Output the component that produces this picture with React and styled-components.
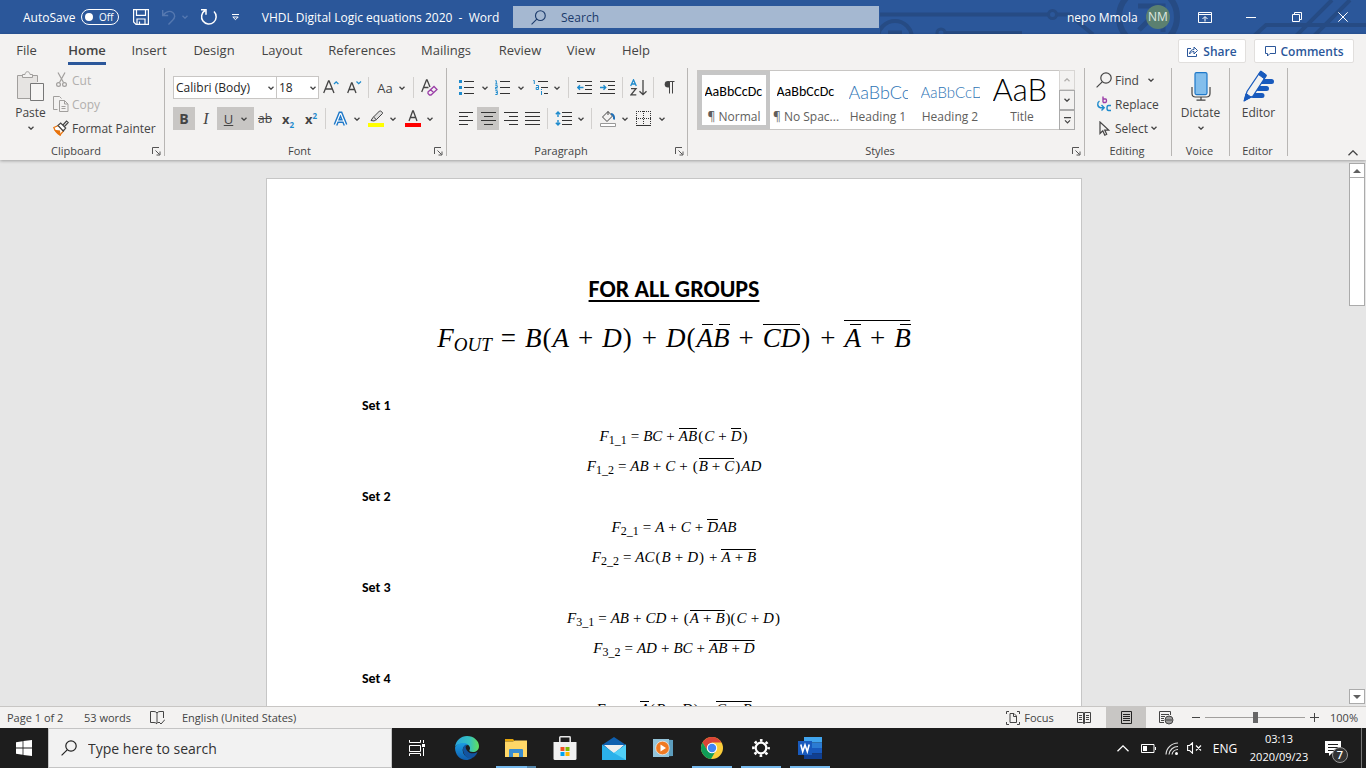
import React, { useState } from 'react';

import styled, { createGlobalStyle } from 'styled-components'


const GlobalStyle = createGlobalStyle`
  * {
    box-sizing: border-box;
  }

  body {
    margin: 0;
    font-family: "Segoe UI", "Open Sans", "Noto Sans", sans-serif;
    font-size: 12px;
    color: #444;
    background: #e6e6e6;
  }

  button, input, select {
    font: inherit;
    color: inherit;
  }

  button {
    padding: 0;
    border: 0;
    background: none;
  }
`

const Window = styled.div`
  display: flex;
  flex-direction: column;
  height: 100vh;
  overflow: hidden;
`

const Svg = styled.svg`
  display: block;
  flex: none;
  fill: none;
  stroke: ${props => props.$color || "#444"};
  stroke-width: ${props => props.$line || 1};
`


/* title bar */

const TitleBar = styled.header`
  position: relative;
  display: flex;
  align-items: center;
  height: 34px;
  flex: none;
  color: #fff;
  background: #2b579a;
`

const Circuit = styled.svg`
  position: absolute;
  right: 0;
  top: 0;
  fill: none;
  stroke: #264b84;
  stroke-width: 4;
`

const QuickAccess = styled.div`
  display: flex;
  align-items: center;
  width: 248px;
  padding-left: 23px;
`

const AutoSave = styled.label`
  display: flex;
  align-items: center;
  gap: 6px;
  width: 103px;
`

const Toggle = styled.input`
  appearance: none;
  position: relative;
  width: 38px;
  height: 16px;
  margin: 0;
  border: 1px solid #fff;
  border-radius: 8px;

  &::before {
    content: "";
    position: absolute;
    left: 3px;
    top: 3px;
    width: 8px;
    height: 8px;
    border-radius: 50%;
    background: #fff;
  }

  &::after {
    content: "Off";
    position: absolute;
    right: 5px;
    top: 0;
    font-size: 10px;
    line-height: 14px;
  }
`

const BarButton = styled.button`
  display: flex;
  align-items: center;
  justify-content: center;
  gap: 6px;
  width: ${props => props.$w}px;
  height: 34px;
`

const DocTitle = styled.div`
  width: 265px;
  text-align: center;
  white-space: nowrap;
`

const SearchBox = styled.label`
  position: relative;
  display: flex;
  align-items: center;
  flex: 0 1 366px;
  height: 22px;
  padding-left: 18px;
  gap: 15px;
  background: #a5b8d1;
`

const SearchInput = styled.input`
  flex: 1;
  min-width: 0;
  padding: 0;
  border: 0;
  outline: 0;
  background: none;
  color: #1b3a6b;

  &::placeholder {
    color: #1b3a6b;
    opacity: 1;
  }
`

const Account = styled.div`
  position: relative;
  display: flex;
  align-items: center;
  margin-left: auto;
`

const UserName = styled.span`
  width: 79px;
`

const Avatar = styled.span`
  width: 24px;
  height: 24px;
  margin-right: 11px;
  border-radius: 50%;
  background: #5b8070;
  color: #dfe8e0;
  line-height: 24px;
  text-align: center;
`


/* ribbon */

const Ribbon = styled.section`
  position: relative;
  z-index: 1;
  flex: none;
  height: 126px;
  background: #f3f2f1;
  box-shadow: 0 1px 3px hsla(0, 0%, 0%, .3);
`

const Tabs = styled.nav`
  display: flex;
  align-items: center;
  height: 34px;
  padding-right: 12px;
  font-size: 13px;
`

const Tab = styled.button`
  display: flex;
  justify-content: center;
  width: ${props => props.$w}px;
  font-weight: ${props => props.$active ? 600 : 400};
`

const TabLabel = styled.span`
  line-height: 24px;
  border-bottom: 3px solid ${props => props.$active ? "#2b579a" : "transparent"};
`

const TabActions = styled.div`
  display: flex;
  gap: 8px;
  margin-left: auto;
`

const ActionButton = styled.button`
  display: flex;
  align-items: center;
  justify-content: center;
  gap: 5px;
  width: ${props => props.$w}px;
  height: 24px;
  border: 1px solid #e1dfdd;
  border-radius: 2px;
  background: #fff;
  color: #2b579a;
  font-size: 12px;
  font-weight: 600;
`

const Groups = styled.div`
  display: flex;
  height: 88px;
`

const Group = styled.div`
  display: flex;
  flex-direction: column;
  width: ${props => props.$w}px;
  height: 88px;
  border-right: 1px solid #b8b6b4;
`

const GroupBody = styled.div`
  display: flex;
  flex: 1;
  padding: ${props => props.$pad || "0"};
`

const GroupFoot = styled.div`
  display: flex;
  align-items: center;
  height: 10px;
  padding-right: 2px;
  font-size: 11px;
  line-height: 10px;
`

const GroupName = styled.span`
  flex: 1;
  text-align: center;
`

const Launcher = styled.button`
  width: 10px;
  height: 8px;
`

const BigButton = styled.button`
  display: flex;
  flex-direction: column;
  align-items: center;
  width: ${props => props.$w}px;
  height: 66px;
`

const BigIcon = styled.span`
  display: flex;
  align-items: center;
  height: 36px;
`

const BigLabel = styled.span`
  line-height: 18px;
  height: 22px;
`

const Stack = styled.div`
  display: flex;
  flex-direction: column;
`

const RowButton = styled.button`
  display: flex;
  align-items: center;
  gap: 3px;
  height: 24px;
  white-space: nowrap;
  color: ${props => props.$off ? "#b1afad" : "#444"};
`

const RowIcon = styled.span`
  display: flex;
  justify-content: center;
  width: 16px;
`

const ToolRow = styled.div`
  display: flex;
  align-items: center;
  height: ${props => props.$h}px;
`

const Tool = styled.button`
  display: flex;
  align-items: center;
  justify-content: center;
  gap: ${props => props.$gap || 6}px;
  width: ${props => props.$w}px;
  height: 23px;
  background: ${props => props.$on ? "#c8c6c4" : "none"};
`

const ToolLine = styled.span`
  width: 1px;
  height: 21px;
  margin: 0 ${props => props.$m}px;
  background: #d2d0ce;
`

const Combo = styled.div`
  position: relative;
  width: ${props => props.$w}px;
  height: 23px;

  & + & {
    margin-left: -1px;
  }
`

const ComboSelect = styled.select`
  appearance: none;
  width: 100%;
  height: 23px;
  padding: 0 2px;
  border: 1px solid #c8c6c4;
  border-radius: 0;
  background: #fff;
  color: #262626;
`

const ComboArrow = styled.span`
  position: absolute;
  right: 3px;
  top: 10px;
  pointer-events: none;
`

const Glyph = styled.span`
  font-size: ${props => props.$size || 14}px;
  font-weight: ${props => props.$bold ? 700 : 400};
  font-style: ${props => props.$italic ? "italic" : "normal"};
  font-family: ${props => props.$serif ? '"Liberation Serif", serif' : "inherit"};
  text-decoration: ${props => props.$deco || "none"};
  line-height: 18px;

  sub, sup {
    font-size: 8px;
    line-height: 0;
    color: #1e8bcd;
  }
`

const Gallery = styled.div`
  display: flex;
  width: 378px;
  height: 60px;
  border: 1px solid #c8c6c4;
  background: #fff;
`

const StyleCard = styled.button`
  display: flex;
  flex-direction: column;
  align-items: center;
  width: 72px;
  height: 58px;
  border: 4px solid ${props => props.$on ? "#c6c6c6" : "transparent"};
`

const StyleSample = styled.span`
  width: 59px;
  height: 33px;
  overflow: hidden;
  text-align: left;
  white-space: nowrap;
  font-family: ${props => props.$light ? "Calibri Light, Lato, sans-serif" : "Calibri, Carlito, Lato, sans-serif"};
  font-size: ${props => props.$size}px;
  font-weight: ${props => props.$light ? 300 : 400};
  line-height: ${props => props.$lh || 34}px;
  color: ${props => props.$color || "#000"};
`

const StyleName = styled.span`
  line-height: 17px;
  white-space: nowrap;
  color: #605e5c;
`

const GalleryButtons = styled.div`
  display: flex;
  flex-direction: column;
  width: 16px;
  margin: -1px -1px -1px auto;
`

const GalleryButton = styled.button`
  display: flex;
  align-items: center;
  justify-content: center;
  flex: 1;
  border: 1px solid ${props => props.$off ? "#d8d6d4" : "#aaa"};
  background: #f3f2f1;
`

const Collapse = styled.button`
  align-self: flex-end;
  margin: 0 8px 0 auto;
`


/* document */

const Workspace = styled.main`
  display: flex;
  flex: 1;
  min-height: 0;
  padding-top: 3px;
`

const Canvas = styled.div`
  flex: 1;
  padding-top: 15px;
  overflow: hidden;
`

const Page = styled.article`
  width: 816px;
  min-height: 1056px;
  margin: 0 auto;
  padding: 95px;
  border: 1px solid #c6c6c6;
  background: #fff;
  color: #000;
  font-family: Calibri, Carlito, Lato, sans-serif;
`

const DocHeading = styled.h1`
  margin: 0;
  font-size: 24px;
  line-height: 30px;
  text-align: center;
  text-decoration: underline;
  text-decoration-thickness: 2px;
  text-underline-offset: 3px;
  text-decoration-skip-ink: none;
`

const SetHeading = styled.h2`
  margin: 0;
  font-size: 14px;
  line-height: 31px;
`

const Equation = styled.p`
  margin: 0;
  text-align: center;
  white-space: nowrap;
  font-family: "Cambria Math", "Liberation Serif", serif;
  font-style: italic;
  font-size: ${props => props.$big ? 27 : 15}px;
  line-height: ${props => props.$big ? 68 : 30}px;
  margin-bottom: ${props => props.$big ? 18 : 0}px;

  sub {
    font-size: ${props => props.$big ? 19 : 12}px;
    font-style: ${props => props.$big ? "italic" : "normal"};
    line-height: 0;
    vertical-align: ${props => props.$big ? -4 : -3}px;
  }
`

const Op = styled.span`
  margin: 0 ${props => props.$big ? 9 : 4}px;
  font-style: normal;
`

const Paren = styled.span`
  font-style: normal;
  margin: 0 1px;
`

// a negation bar; an accent is the short bar over a single letter
const Bar = styled.span`
  display: inline-block;
  padding-top: ${props => props.$outer ? 4 : 1}px;
  background: linear-gradient(#000, #000) right top / ${props => props.$accent ? "11px" : "100%"} 1px no-repeat;
  line-height: ${props => props.$big ? 26 : 14}px;
`

const Scroll = styled.div`
  display: flex;
  flex-direction: column;
  width: 18px;
  padding: 0 1px 2px;
`

const ScrollButton = styled.button`
  display: flex;
  align-items: center;
  justify-content: center;
  height: 15px;
  border: 1px solid #ababab;
  background: #fff;
`

const ScrollThumb = styled.div`
  height: 128px;
  margin-bottom: auto;
  border: 1px solid #ababab;
  border-top: 0;
  background: #fff;
`


/* status bar */

const StatusBar = styled.footer`
  display: flex;
  align-items: center;
  flex: none;
  height: 22px;
  padding: 0 8px 0 7px;
  border-top: 1px solid #c8c6c4;
  background: #f3f2f1;
  font-size: 11px;
  white-space: nowrap;
`

const StatusItem = styled.span`
  width: ${props => props.$w}px;
`

const StatusRight = styled.div`
  display: flex;
  align-items: center;
  margin-left: auto;
`

const ViewButton = styled.button`
  display: flex;
  align-items: center;
  justify-content: center;
  gap: 4px;
  width: ${props => props.$w}px;
  height: 21px;
  background: ${props => props.$on ? "#c8c6c4" : "none"};
`

const Zoom = styled.input`
  appearance: none;
  width: 100px;
  height: 11px;
  margin: 0;
  background: linear-gradient(#a19f9d, #a19f9d) center / 100% 1px no-repeat;

  &::-webkit-slider-thumb {
    appearance: none;
    width: 5px;
    height: 11px;
    background: #666;
  }
`

const ZoomValue = styled.span`
  width: 34px;
  text-align: right;
`


/* taskbar */

const Taskbar = styled.div`
  display: flex;
  flex: none;
  height: 40px;
  background: #1d1d1d;
  color: #fff;
`

const TaskButton = styled.button`
  position: relative;
  display: flex;
  align-items: center;
  justify-content: center;
  width: ${props => props.$w || 49}px;
  height: 40px;

  &::after {
    content: "";
    position: absolute;
    left: 5px;
    bottom: 0;
    width: 40px;
    height: ${props => props.$open ? 2 : 0}px;
    background: ${props => props.$many ? "linear-gradient(90deg, #76b9ed 31px, #5586ab 31px)" : "#76b9ed"};
  }
`

const TaskSearch = styled.label`
  display: flex;
  align-items: center;
  gap: 11px;
  width: 344px;
  padding-left: 12px;
  border: 1px solid #c4c4c4;
  background: #f2f2f2;
`

const TaskInput = styled.input`
  flex: 1;
  min-width: 0;
  padding: 0;
  border: 0;
  outline: 0;
  background: none;
  font-size: 14px;

  &::placeholder {
    color: #333;
    opacity: 1;
  }
`

const Tray = styled.div`
  display: flex;
  align-items: center;
  margin-left: auto;
  padding-right: 4px;
`

const TrayButton = styled.button`
  display: flex;
  align-items: center;
  justify-content: center;
  width: ${props => props.$w}px;
  height: 40px;
`

const Clock = styled.button`
  width: 76px;
  line-height: 18px;
  font-size: 11px;
`

const Notices = styled.button`
  position: relative;
  width: 45px;
  height: 40px;
  padding-left: 8px;
  border-right: 1px solid #777;
`

const Badge = styled.span`
  position: absolute;
  left: 15px;
  top: 19px;
  width: 16px;
  height: 16px;
  border: 1px solid #999;
  border-radius: 50%;
  background: #333;
  font-size: 11px;
  font-weight: 600;
  line-height: 14px;
`


function Chevron(props) {
  return (
    <Svg width="6" height="4" viewBox="0 0 6 4" $color={props.color} $line={1.3}>
      <path d={props.up ? "M.5 3.3 3 .8 5.5 3.3" : "M.5.7 3 3.2 5.5.7"} />
    </Svg>
  )
}

function Lens(props) {
  return (
    <Svg width={props.size} height={props.size} viewBox="0 0 16 16" $color={props.color} $line={1.2}>
      <circle cx="10" cy="6" r="5.2" />
      <path d="M6.2 9.8.6 15.4" />
    </Svg>
  )
}

// each entry is [y, x1, x2]
function Lines(props) {
  return (
    <Svg width="15" height="15" viewBox="0 0 15 15" $color="#333">
      {props.rows.map((r) => <path key={r[0]} d={`M${r[1]} ${r[0]}.5H${r[2]}`} />)}
      {props.children}
    </Svg>
  )
}

function LaunchIcon() {
  return (
    <Svg width="9" height="9" viewBox="0 0 9 9" $color="#555">
      <path d="M.5 7V.5H7M3.5 3.5l4 4M8 4.5v3.5H4.5" />
    </Svg>
  )
}

function RibbonGroup(props) {
  return (
    <Group $w={props.width}>
      <GroupBody $pad={props.pad}>{props.children}</GroupBody>
      <GroupFoot>
        <GroupName>{props.name}</GroupName>
        {props.launcher && <Launcher aria-label={props.name + " settings"}><LaunchIcon /></Launcher>}
      </GroupFoot>
    </Group>
  )
}


function TopBar() {
  return (
    <TitleBar>
      <Circuit width="486" height="34" viewBox="0 0 486 34">
        <path d="M0 14.5h168M177 14.5h12l24 20M64 33h78" />
        <circle cx="172.500" cy="14.500" r="4" strokeWidth="3" />
        <circle cx="61" cy="33" r="4" strokeWidth="3" />
        <circle cx="15" cy="38" r="17" />
        <path d="M8 33h14M258 6h25v26M281 8l-22 22" strokeWidth="5" />
        <circle cx="268" cy="17" r="29" strokeWidth="6" />
        <path d="M374 36l12-11h100M416 36l36-36M434 36l36-36" />
      </Circuit>
      <QuickAccess>
        <AutoSave>AutoSave <Toggle type="checkbox" /></AutoSave>
        <BarButton $w={30} aria-label="Save">
          <Svg width="16" height="16" viewBox="0 0 16 16" $color="#fff" $line={1.2}>
            <path d="M.6.6h14.800v14.800H3L.6 13zM3.500.6v5.800h9V.6M4 15.400V10h8v5.400M6.500 15v-2.500" />
          </Svg>
        </BarButton>
        <BarButton $w={38} aria-label="Undo">
          <Svg width="14" height="16" viewBox="0 0 14 16" $color="#5578b0" $line={1.400}>
            <path d="M.7 1v5.500h5.500M1 6.200C4 2.500 8 1.500 10.800 3.500c3 2.500 2 5.500 0 7.500L6.500 15.500" />
          </Svg>
          <Chevron color="#5578b0" />
        </BarButton>
        <BarButton $w={29} aria-label="Redo">
          <Svg width="18" height="18" viewBox="0 0 18 18" $color="#fff" $line={1.500}>
            <path d="M5 2.500A7.300 7.300 0 1 0 14 3.500M1 1.700h5v5" />
          </Svg>
        </BarButton>
        <BarButton $w={25} aria-label="Customize">
          <Svg width="7" height="7" viewBox="0 0 7 7" $color="#fff">
            <path d="M0 .5h7M.8 3 3.500 5.700 6.200 3z" />
          </Svg>
        </BarButton>
      </QuickAccess>
      <DocTitle>VHDL Digital Logic equations 2020 &nbsp;-&nbsp; Word</DocTitle>
      <SearchBox>
        <Lens size={15} color="#1b3a6b" />
        <SearchInput type="text" placeholder="Search" aria-label="Search" />
      </SearchBox>
      <Account>
        <UserName>nepo Mmola</UserName>
        <Avatar>NM</Avatar>
        <BarButton $w={47} aria-label="Ribbon options">
          <Svg width="14" height="11" viewBox="0 0 14 11" $color="#fff">
            <path d="M.5.5h13v10H.5zM.5 2.500h13M7 9.500V5M4.500 7 7 4.500 9.500 7" />
          </Svg>
        </BarButton>
        <BarButton $w={46} aria-label="Minimize">
          <Svg width="10" height="1" viewBox="0 0 10 1" $color="#fff"><path d="M0 .5h10" /></Svg>
        </BarButton>
        <BarButton $w={46} aria-label="Restore">
          <Svg width="10" height="10" viewBox="0 0 10 10" $color="#fff">
            <path d="M.5 2.500h7v7h-7zM2.500 2.500v-2h7v7h-2" />
          </Svg>
        </BarButton>
        <BarButton $w={46} aria-label="Close">
          <Svg width="10" height="10" viewBox="0 0 10 10" $color="#fff"><path d="M.3.3l9.400 9.400M9.700.3.3 9.700" /></Svg>
        </BarButton>
      </Account>
    </TitleBar>
  )
}


const tabs = [
  ["File", 53], ["Home", 68], ["Insert", 56], ["Design", 74], ["Layout", 62], ["References", 98],
  ["Mailings", 70], ["Review", 78], ["View", 44], ["Help", 66],
]

function TabStrip() {

  const [active, setActive] = useState("Home");

  return (
    <Tabs>
      {tabs.map(([name, w]) => (
        <Tab key={name} $w={w} $active={name === active} onClick={() => setActive(name)}>
          <TabLabel $active={name === active}>{name}</TabLabel>
        </Tab>
      ))}
      <TabActions>
        <ActionButton $w={68}>
          <Svg width="11" height="11" viewBox="0 0 11 11" $color="#2b579a">
            <path d="M4 2.500H.5v8h9V8M2.500 8c.3-3 2-4.500 4.500-4.500V1l3.500 3.500L7 8V5.500C5 5.500 3.500 6.300 2.500 8z" />
          </Svg>
          Share
        </ActionButton>
        <ActionButton $w={100}>
          <Svg width="11" height="11" viewBox="0 0 11 11" $color="#2b579a">
            <path d="M.5.5h10v7H5L2.500 10V7.500h-2z" />
          </Svg>
          Comments
        </ActionButton>
      </TabActions>
    </Tabs>
  )
}


function ClipboardGroup() {
  return (
    <RibbonGroup name="Clipboard" width={165} pad="0 0 0 8px" launcher>
      <BigButton $w={45}>
        <BigIcon>
          <Svg width="28" height="31" viewBox="0 0 28 31" $color="#a19f9d">
            <path d="M6 4.500H.5v23H13M15 4.500h5.500V11" fill="#e8e8e8" />
            <path d="M1 5h19v7h-7v15H1z" fill="#e6e4e2" stroke="none" />
            <path d="M5.500 6.500v-3h2.500C8.300 1.500 9.300.7 10.500.7s2.200.8 2.500 2.800h2.500v3z" fill="#f3f2f1" />
            <path d="M13.500 12.500h13v17h-13z" fill="#f6f5f4" stroke="#777" />
          </Svg>
        </BigIcon>
        <BigLabel>Paste</BigLabel>
        <Chevron />
      </BigButton>
      <Stack>
        <RowButton $off>
          <RowIcon>
            <Svg width="11" height="16" viewBox="0 0 11 16" $color="#a19f9d" $line={1.200}>
              <path d="M2 .5l5.500 10M9 .5l-5.500 10" />
              <circle cx="2.500" cy="12.500" r="1.900" /><circle cx="8.500" cy="12.500" r="1.900" />
            </Svg>
          </RowIcon>
          Cut
        </RowButton>
        <RowButton $off>
          <RowIcon>
            <Svg width="16" height="16" viewBox="0 0 16 16" $color="#a19f9d">
              <path d="M4.500 13.500h-4V.5h6l2 2M6.500 4.500h5l3.500 3.500v7.500H6.500zM11.500 4.500V8H15M8.500 10.500h4M8.500 12.500h4" />
            </Svg>
          </RowIcon>
          Copy
        </RowButton>
        <RowButton>
          <RowIcon>
            <Svg width="16" height="16" viewBox="0 0 16 16" $line={1.200}>
              <path d="M.8 7.500 5.500 5.500l5 5.500-3.500 4C5 14 2 11 .8 7.500z" fill="#fff" stroke="#e8730c" />
              <path d="M2.500 10.500l4 .5.5 4z" fill="#e8730c" stroke="#e8730c" />
              <path d="M5 5.500 7.700 3l5 5-2.500 3zM10 5l3.500-4 1.700 1.500-3.700 4" fill="#fff" />
            </Svg>
          </RowIcon>
          Format Painter
        </RowButton>
      </Stack>
    </RibbonGroup>
  )
}


function FontGroup() {
  return (
    <RibbonGroup name="Font" width={282} pad="4px 0 0 8px" launcher>
      <Stack>
        <ToolRow $h={31}>
          <Combo $w={104}>
            <ComboSelect aria-label="Font"><option>Calibri (Body)</option></ComboSelect>
            <ComboArrow><Chevron /></ComboArrow>
          </Combo>
          <Combo $w={43}>
            <ComboSelect aria-label="Font size"><option>18</option></ComboSelect>
            <ComboArrow><Chevron /></ComboArrow>
          </Combo>
          <Tool $w={24} aria-label="Grow font">
            <Svg width="16" height="15" viewBox="0 0 16 15" $line={1.300}>
              <path d="M.7 13 5.500 1h.6L11 13M2.500 9h6.700" /><path d="M11 4l2.200-2.200L15.400 4" stroke="#1e8bcd" />
            </Svg>
          </Tool>
          <Tool $w={22} aria-label="Shrink font">
            <Svg width="15" height="15" viewBox="0 0 15 15" $line={1.300}>
              <path d="M.7 13 4.500 3h.6L9 13M2 9.500h5.700" /><path d="M9.500 1.500l2.200 2.200L14 1.500" stroke="#1e8bcd" />
            </Svg>
          </Tool>
          <ToolLine $m={3} />
          <Tool $w={38}><Glyph $size={13}>Aa</Glyph><Chevron /></Tool>
          <ToolLine $m={3} />
          <Tool $w={24} aria-label="Clear formatting">
            <Svg width="17" height="17" viewBox="0 0 17 17" $line={1.300}>
              <path d="M.7 13 5.500 1h.6L9 8M2.500 8.500h5" />
              <path d="M7 13l6-5.500 3 3-6 5.500H8.500L7 14.500zM9.500 10.500l3.500 3.500" stroke="#9b3fa8" />
            </Svg>
          </Tool>
        </ToolRow>
        <ToolRow $h={31}>
          <Tool $w={22} $on><Glyph $bold>B</Glyph></Tool>
          <Tool $w={22}><Glyph $italic $serif $size={16}>I</Glyph></Tool>
          <Tool $w={37} $on $gap={8}><Glyph $size={13} $deco="underline">U</Glyph><Chevron /></Tool>
          <Tool $w={22}><Glyph $size={12} $deco="line-through">ab</Glyph></Tool>
          <Tool $w={24}><Glyph $bold $size={13}>x<sub>2</sub></Glyph></Tool>
          <Tool $w={22}><Glyph $bold $size={13}>x<sup>2</sup></Glyph></Tool>
          <ToolLine $m={3} />
          <Tool $w={35} aria-label="Text effects">
            <Svg width="15" height="16" viewBox="0 0 15 16" $color="#1e78c8" $line={4}>
              <path d="M2.500 14 7.200 2.500h.6L12.500 14M4.500 10h6" />
              <path d="M2.500 14 7.200 2.500h.6L12.500 14M4.500 10h6" stroke="#fff" strokeWidth="1.200" />
            </Svg>
            <Chevron />
          </Tool>
          <Tool $w={36} aria-label="Highlight">
            <Svg width="16" height="17" viewBox="0 0 16 17">
              <path d="M3 10.500l2-3L11.500 1h1l2 1.500v1L8.500 9.500 6 11z" fill="#ddd" /><path d="M5.500 7l3 2.800" />
              <path d="M0 15h16" stroke="#ffff00" strokeWidth="4" />
            </Svg>
            <Chevron />
          </Tool>
          <Tool $w={38} aria-label="Font color">
            <Svg width="16" height="17" viewBox="0 0 16 17" $line={1.300}>
              <path d="M4 11 7.700 1h.6L12 11M5.500 7.500h5" />
              <path d="M0 15h16" stroke="#ff0000" strokeWidth="4" />
            </Svg>
            <Chevron />
          </Tool>
        </ToolRow>
      </Stack>
    </RibbonGroup>
  )
}


function ParagraphGroup() {
  return (
    <RibbonGroup name="Paragraph" width={241} pad="4px 0 0 8px" launcher>
      <Stack>
        <ToolRow $h={31}>
          <Tool $w={36} $gap={8} aria-label="Bullets">
            <Lines rows={[[1, 5, 15], [7, 5, 15], [13, 5, 15]]}>
              <path d="M0 1.500h3M0 7.500h3M0 13.500h3" stroke="#1e8bcd" strokeWidth="3" />
            </Lines>
            <Chevron />
          </Tool>
          <Tool $w={37} $gap={8} aria-label="Numbering">
            <Lines rows={[[1, 5, 15], [7, 5, 15], [13, 5, 15]]}>
              <path d="M.3.700h1V4M.2 4h2.300M.3 5.700h2v1.800h-2V9h2.200M.3 10.700h2v3.800h-2M.8 12.500h1.500" stroke="#1e8bcd" />
            </Lines>
            <Chevron />
          </Tool>
          <Tool $w={36} aria-label="Multilevel list">
            <Lines rows={[[1, 5, 15], [7, 8, 15], [13, 11, 15]]}>
              <path d="M.3.500h1V4M3 5.500h2.500v4H3.200V7.500h2.300M8.500 11V15M8.500 9v1" stroke="#1e8bcd" />
            </Lines>
            <Chevron />
          </Tool>
          <ToolLine $m={4} />
          <Tool $w={23} aria-label="Decrease indent">
            <Lines rows={[[1, 0, 15], [5, 8, 15], [9, 8, 15], [13, 0, 15]]}>
              <path d="M6.500 7.500H1M3 5.300.8 7.500 3 9.700" stroke="#1e8bcd" strokeWidth="1.400" />
            </Lines>
          </Tool>
          <Tool $w={22} aria-label="Increase indent">
            <Lines rows={[[1, 0, 15], [5, 8, 15], [9, 8, 15], [13, 0, 15]]}>
              <path d="M0 7.500h5.500M3.500 5.300l2.200 2.200-2.200 2.200" stroke="#1e8bcd" strokeWidth="1.400" />
            </Lines>
          </Tool>
          <ToolLine $m={4} />
          <Tool $w={23} aria-label="Sort">
            <Svg width="17" height="17" viewBox="0 0 17 17" $line={1.300}>
              <path d="M.7 7 3.500.8 6.300 7M1.700 5h3.600" stroke="#1e8bcd" />
              <path d="M1 9.700h5L1 15.800h5.300M13 1v14.500M9.500 12.200l3.500 3.500 3.500-3.500" />
            </Svg>
          </Tool>
          <ToolLine $m={3} />
          <Tool $w={24} aria-label="Show marks">
            <Svg width="11" height="13" viewBox="0 0 11 13">
              <path d="M5.500.5H10.500M5.500.5V12.500M8.500.5V12.500" />
              <path d="M5.500 0H4a3.300 3.300 0 0 0 0 6.600h1.500z" fill="#444" stroke="none" />
            </Svg>
          </Tool>
        </ToolRow>
        <ToolRow $h={31}>
          <Tool $w={22} aria-label="Align left">
            <Lines rows={[[1, 0, 14], [5, 0, 9], [9, 0, 14], [13, 0, 9]]} />
          </Tool>
          <Tool $w={22} $on aria-label="Center">
            <Lines rows={[[1, 0, 15], [5, 3, 12], [9, 0, 15], [13, 3, 12]]} />
          </Tool>
          <Tool $w={22} aria-label="Align right">
            <Lines rows={[[1, 1, 15], [5, 6, 15], [9, 1, 15], [13, 6, 15]]} />
          </Tool>
          <Tool $w={22} aria-label="Justify">
            <Lines rows={[[1, 0, 15], [5, 0, 15], [9, 0, 15], [13, 0, 15]]} />
          </Tool>
          <ToolLine $m={4} />
          <Tool $w={35} aria-label="Line spacing">
            <Svg width="17" height="15" viewBox="0 0 17 15">
              <path d="M7 1.500h10M7 5.500h10M7 9.500h10M7 13.500h10" stroke="#333" />
              <path d="M3 1v5M.8 3.200 3 1l2.200 2.200M3 9v5M.8 11.800 3 14l2.200-2.200" stroke="#1e8bcd" strokeWidth="1.400" />
            </Svg>
            <Chevron />
          </Tool>
          <ToolLine $m={4} />
          <Tool $w={36} aria-label="Shading">
            <Svg width="16" height="17" viewBox="0 0 16 17">
              <path d="M2.500 7 8 1.500 12.500 6 7 11.500zM8 1.500V5" /><path d="M11 4c2 0 3.500 2 3 5.500" stroke="#1e6fb8" strokeWidth="2" />
              <path d="M.5 13.500h15v3H.5z" fill="#fff" stroke="#999" />
            </Svg>
            <Chevron />
          </Tool>
          <Tool $w={37} $gap={8} aria-label="Borders">
            <Svg width="15" height="15" viewBox="0 0 15 15" $color="#333">
              <path d="M0 .5h15M.5 0v14M14.500 0v14M7.500 0v14M0 7.500h15" strokeDasharray="1 1" />
              <path d="M0 14.500h15" />
            </Svg>
            <Chevron />
          </Tool>
        </ToolRow>
      </Stack>
    </RibbonGroup>
  )
}


function StylesGroup() {
  return (
    <RibbonGroup name="Styles" width={397} pad="2px 0 0 9px" launcher>
      <Gallery>
        <StyleCard $on>
          <StyleSample $size={14}>AaBbCcDc</StyleSample>
          <StyleName>¶ Normal</StyleName>
        </StyleCard>
        <StyleCard>
          <StyleSample $size={14}>AaBbCcDc</StyleSample>
          <StyleName>¶ No Spac...</StyleName>
        </StyleCard>
        <StyleCard>
          <StyleSample $size={18} $light $color="#2e74b5">AaBbCc</StyleSample>
          <StyleName>Heading 1</StyleName>
        </StyleCard>
        <StyleCard>
          <StyleSample $size={15} $light $color="#2e74b5">AaBbCcD</StyleSample>
          <StyleName>Heading 2</StyleName>
        </StyleCard>
        <StyleCard>
          <StyleSample $size={31} $light $lh={28}>AaB</StyleSample>
          <StyleName>Title</StyleName>
        </StyleCard>
        <GalleryButtons>
          <GalleryButton $off aria-label="Previous styles"><Chevron up color="#b1afad" /></GalleryButton>
          <GalleryButton aria-label="Next styles"><Chevron /></GalleryButton>
          <GalleryButton aria-label="More styles">
            <Svg width="7" height="7" viewBox="0 0 7 7" $line={1.200}><path d="M0 .6h7M1 3.300l2.500 2.500L6 3.300" /></Svg>
          </GalleryButton>
        </GalleryButtons>
      </Gallery>
    </RibbonGroup>
  )
}


function EditingGroup() {
  return (
    <RibbonGroup name="Editing" width={87} pad="0 0 0 11px">
      <Stack>
        <RowButton>
          <RowIcon><Lens size={16} color="#444" /></RowIcon>
          Find &nbsp;<Chevron />
        </RowButton>
        <RowButton>
          <RowIcon>
            <Svg width="16" height="16" viewBox="0 0 16 16" $color="#1e8bcd" $line={1.400}>
              <path d="M7 .5v6M7 3h2.500q1 0 1 1.700T9.500 6.500H7" stroke="#9b3fa8" />
              <path d="M15 9.500h-2.500q-1.500 0-1.500 2.500t1.500 2.500H15M3.500 5C1 6.500 1 11 4.500 11.700H8M5.500 9 8.200 11.700 5.500 14.500" />
            </Svg>
          </RowIcon>
          Replace
        </RowButton>
        <RowButton>
          <RowIcon>
            <Svg width="11" height="15" viewBox="0 0 11 15" $line={1.200}>
              <path d="M1 1v11.500l2.800-2.700 2 4.400 1.900-.9-2-4.200h4z" />
            </Svg>
          </RowIcon>
          Select <Chevron />
        </RowButton>
      </Stack>
    </RibbonGroup>
  )
}


function RibbonBar() {
  return (
    <Ribbon>
      <TabStrip />
      <Groups>
        <ClipboardGroup />
        <FontGroup />
        <ParagraphGroup />
        <StylesGroup />
        <EditingGroup />
        <RibbonGroup name="Voice" width={58}>
          <BigButton $w={57}>
            <BigIcon>
              <Svg width="20" height="29" viewBox="0 0 20 29" $line={1.200}>
                <rect x="4" y=".6" width="12" height="22" rx="1.500" fill="#83beec" stroke="#1e78c8" />
                <path d="M1 15v6.500c0 2 1.500 3.500 3.500 3.500h11c2 0 3.500-1.500 3.500-3.500V15M10 25v3M5.500 28.200h9" />
              </Svg>
            </BigIcon>
            <BigLabel>Dictate</BigLabel>
            <Chevron />
          </BigButton>
        </RibbonGroup>
        <RibbonGroup name="Editor" width={58}>
          <BigButton $w={57}>
            <BigIcon>
              <Svg width="31" height="32" viewBox="0 0 31 32" $color="#185abd">
                <path d="M18 11.500h10.500M15 18.500h8.500M10 25.500h9" strokeWidth="5" strokeLinecap="round" />
                <path d="M1.500 30.500l2.500-9L17.500 1.500 23 6 10 26z" fill="#f3f2f1" strokeWidth="1.200" />
                <path d="M1 31l2-7.500 5 3.500zM15.500 4.500 18 1l5.500 4-2.500 3.500z" fill="#185abd" />
              </Svg>
            </BigIcon>
            <BigLabel>Editor</BigLabel>
          </BigButton>
        </RibbonGroup>
        <Collapse aria-label="Collapse ribbon">
          <Svg width="10" height="6" viewBox="0 0 10 6" $line={1.300}><path d="M.5 5.300 5 .8l4.500 4.500" /></Svg>
        </Collapse>
      </Groups>
    </Ribbon>
  )
}


function Document() {
  return (
    <Page>
      <DocHeading>FOR ALL GROUPS</DocHeading>
      <Equation $big>
        F<sub>OUT</sub><Op $big>=</Op>B<Paren>(</Paren>A<Op $big>+</Op>D<Paren>)</Paren><Op $big>+</Op>
        D<Paren>(</Paren><Bar $big $accent>A</Bar><Bar $big $accent>B</Bar><Op $big>+</Op><Bar $big>CD</Bar><Paren>)</Paren>
        <Op $big>+</Op><Bar $big $outer><Bar $big $accent>A</Bar><Op $big>+</Op><Bar $big $accent>B</Bar></Bar>
      </Equation>

      <SetHeading>Set 1</SetHeading>
      <Equation>
        F<sub>1_1</sub><Op>=</Op>BC<Op>+</Op><Bar>AB</Bar><Paren>(</Paren>C<Op>+</Op><Bar>D</Bar><Paren>)</Paren>
      </Equation>
      <Equation>
        F<sub>1_2</sub><Op>=</Op>AB<Op>+</Op>C<Op>+</Op><Paren>(</Paren><Bar>B<Op>+</Op>C</Bar><Paren>)</Paren>AD
      </Equation>

      <SetHeading>Set 2</SetHeading>
      <Equation>
        F<sub>2_1</sub><Op>=</Op>A<Op>+</Op>C<Op>+</Op><Bar>D</Bar>AB
      </Equation>
      <Equation>
        F<sub>2_2</sub><Op>=</Op>AC<Paren>(</Paren>B<Op>+</Op>D<Paren>)</Paren><Op>+</Op><Bar>A<Op>+</Op>B</Bar>
      </Equation>

      <SetHeading>Set 3</SetHeading>
      <Equation>
        F<sub>3_1</sub><Op>=</Op>AB<Op>+</Op>CD<Op>+</Op><Paren>(</Paren><Bar>A<Op>+</Op>B</Bar><Paren>)(</Paren>C<Op>+</Op>D<Paren>)</Paren>
      </Equation>
      <Equation>
        F<sub>3_2</sub><Op>=</Op>AD<Op>+</Op>BC<Op>+</Op><Bar>AB<Op>+</Op>D</Bar>
      </Equation>

      <SetHeading>Set 4</SetHeading>
      <Equation>
        F<sub>4_1</sub><Op>=</Op><Bar>A</Bar><Paren>(</Paren>B<Op>+</Op>D<Paren>)</Paren><Op>+</Op><Bar>C<Op>+</Op>B</Bar>
      </Equation>
    </Page>
  )
}


function Status() {
  return (
    <StatusBar>
      <StatusItem $w={77}>Page 1 of 2</StatusItem>
      <StatusItem $w={66}>53 words</StatusItem>
      <StatusItem $w={32}>
        <Svg width="15" height="14" viewBox="0 0 15 14">
          <path d="M7 12.500V2Q6 .5 4 .5H.5v11H4q2 0 3 1.500M7 2Q8 .5 10 .5h3.500V7M7.500 11.500h2M9 11l2 2 4-4.500" />
        </Svg>
      </StatusItem>
      <StatusItem>English (United States)</StatusItem>
      <StatusRight>
        <ViewButton $w={62}>
          <Svg width="14" height="14" viewBox="0 0 14 14">
            <path d="M3 .5H.5V3M11 .5h2.500V3M3 13.500H.5V11M11 13.500h2.500V11M4 2.500h4L10.500 5v6.500H4zM7.500 2.500v3h3" />
          </Svg>
          Focus
        </ViewButton>
        <ViewButton $w={45} aria-label="Read mode">
          <Svg width="14" height="12" viewBox="0 0 14 12">
            <path d="M6.500 11.500V.5H.5v10h5l1.500 1 1.500-1h5V.5h-6v11M2 3.500h3M2 5.500h3M2 7.500h3M9 3.500h3M9 5.500h3M9 7.500h3" />
          </Svg>
        </ViewButton>
        <ViewButton $w={40} $on aria-label="Print layout">
          <Svg width="11" height="13" viewBox="0 0 11 13" $color="#222">
            <path d="M.5.5h10v12H.5zM2 3.500h7M2 5.500h7M2 7.500h7M2 9.500h7" />
          </Svg>
        </ViewButton>
        <ViewButton $w={40} aria-label="Web layout">
          <Svg width="15" height="14" viewBox="0 0 15 14">
            <path d="M5 11.500H.5V.5h11V4M2 3.500h8M2 5.500h4M2 7.500h3M2 9.500h3" />
            <circle cx="10" cy="9" r="4" /><path d="M6 9h8M10 5v8M8 6v6M12 6v6" />
          </Svg>
        </ViewButton>
        <ViewButton $w={19} aria-label="Zoom out">
          <Svg width="8" height="9" viewBox="0 0 8 9"><path d="M0 4.500h8" /></Svg>
        </ViewButton>
        <Zoom type="range" min="0" max="100" defaultValue="50" aria-label="Zoom" />
        <ViewButton $w={19} aria-label="Zoom in">
          <Svg width="9" height="9" viewBox="0 0 9 9"><path d="M0 4.500h9M4.500 0v9" /></Svg>
        </ViewButton>
        <ZoomValue>100%</ZoomValue>
      </StatusRight>
    </StatusBar>
  )
}


function EdgeIcon() {
  return (
    <Svg width="24" height="24" viewBox="0 0 24 24" $color="none">
      <defs>
        <linearGradient id="edgeTop" x1="0" x2="1"><stop offset="0" stopColor="#2aa5dc" /><stop offset=".6" stopColor="#35c1c0" /><stop offset="1" stopColor="#62e05a" /></linearGradient>
        <linearGradient id="edgeLow" x1="0" x2="0" y1="0" y2="1"><stop offset="0" stopColor="#1b9de2" /><stop offset="1" stopColor="#0f5cad" /></linearGradient>
      </defs>
      <path d="M0 11C1 4 6 0 12 0c7 0 12 5 12 10 0 4-3 6-6 6-3 0-4-1-3.500-2 1.500-2 0-5-3.500-6C6 7 2 8 0 11z" fill="url(#edgeTop)" />
      <path d="M0 11.500C2 7.500 6 6.500 9.500 7c2 .3 3 1 3.500 2-4 0-6 3-5 7 1 4 5 6 9 6-2 1.500-4 2-6 2C5 24 0 19 0 11.500z" fill="url(#edgeLow)" />
      <path d="M8 13c0-2.500 2-4.500 4-4.500-2 2-1.500 4 0 6 2.500 3.500 7 3.500 10.500 1.500C21 20 18 22.500 14.500 22.500 10 21 8 17 8 13z" fill="#1254a0" />
    </Svg>
  )
}

function StartIcon() {
  return (
    <Svg width="16" height="16" viewBox="0 0 16 16" $color="none">
      <path d="M0 2.200 6.600 1.200V7.600H0zM7.400 1.100 16 0v7.600H7.400zM0 8.400h6.600v6.400L0 13.800zM7.400 8.400H16V16l-8.600-1.100z" fill="#fff" />
    </Svg>
  )
}

function Desktop() {
  return (
    <Taskbar>
      <TaskButton $w={48} aria-label="Start"><StartIcon /></TaskButton>
      <TaskSearch>
        <Lens size={16} color="#222" />
        <TaskInput type="text" placeholder="Type here to search" aria-label="Type here to search" />
      </TaskSearch>
      <TaskButton $w={50} aria-label="Task view">
        <Svg width="16" height="16" viewBox="0 0 16 16" $color="#fff">
          <path d="M.5 0v2.500h11V0M.5 5.500h11v6H.5zM.5 16v-2.500h11V16M14.500 0v3M14.500 8v8" /><path d="M13 5.500h3" strokeWidth="3" />
        </Svg>
      </TaskButton>
      <TaskButton aria-label="Edge"><EdgeIcon /></TaskButton>
      <TaskButton $open $many aria-label="File Explorer">
        <Svg width="22" height="19" viewBox="0 0 22 19" $color="none">
          <path d="M0 0h8l2 2.500H0z" fill="#e5a50a" /><path d="M0 2.500h8L10 1.500h12V18H0z" fill="#ffd767" />
          <path d="M4 18v-7q0-1 1-1h12q1 0 1 1v7h-4v-4H8v4z" fill="#3a8dd0" />
        </Svg>
      </TaskButton>
      <TaskButton aria-label="Store">
        <Svg width="24" height="24" viewBox="0 0 24 24" $color="none">
          <path d="M6.800 7V1.500q0-.7.7-.7h9q.7 0 .7.700V7" stroke="#e8e8e8" strokeWidth="1.500" />
          <path d="M.5 6h23v16.500q0 1.500-1.500 1.500H2q-1.500 0-1.500-1.500z" fill="#f0f0f0" />
          <path d="M7.500 11h4v4h-4z" fill="#f25022" /><path d="M12.500 11h4v4h-4z" fill="#7fba00" />
          <path d="M7.500 16h4v4h-4z" fill="#00a4ef" /><path d="M12.500 16h4v4h-4z" fill="#ffb900" />
        </Svg>
      </TaskButton>
      <TaskButton aria-label="Mail">
        <Svg width="24" height="23" viewBox="0 0 24 23" $color="none">
          <path d="M0 8 12 0l12 8v4H0z" fill="#0f5fae" /><path d="M2 8h20L12 17z" fill="#eee" />
          <path d="M0 7.500 12 16l12-8.500V23H0z" fill="#2bb1ea" /><path d="M24 7.500V23L12 16z" fill="#50d0f8" />
        </Svg>
      </TaskButton>
      <TaskButton aria-label="Media player">
        <Svg width="20" height="20" viewBox="0 0 20 20" $color="none">
          <path d="M3 1l17 1v16l-17 1z" fill="#5c9dbd" /><path d="M0 1h16v18H0z" fill="#94c4da" />
          <circle cx="9.500" cy="10" r="6.800" fill="#f07a22" stroke="#fff" strokeWidth=".6" /><path d="M7.500 6.500v7l5.500-3.500z" fill="#fff" />
        </Svg>
      </TaskButton>
      <TaskButton $open aria-label="Chrome">
        <Svg width="22" height="22" viewBox="0 0 22 22" $color="none">
          <circle cx="11" cy="11" r="11" fill="#fbcd3a" />
          <path d="M1.500 5.500A11 11 0 0 1 20.500 5.500H11L6 13z" fill="#db4437" />
          <path d="M1.500 5.500A11 11 0 0 0 10 22l5-8.500H6.500z" fill="#0f9d58" />
          <circle cx="11" cy="11" r="5.200" fill="#fff" /><circle cx="11" cy="11" r="4.200" fill="#4285f4" />
        </Svg>
      </TaskButton>
      <TaskButton $open aria-label="Settings">
        <Svg width="18" height="18" viewBox="0 0 18 18" $color="#fff">
          <circle cx="9" cy="9" r="5.300" strokeWidth="2.200" />
          <circle cx="9" cy="9" r="7.600" strokeWidth="2.600" strokeDasharray="2.600 3.369" strokeDashoffset="1.300" />
        </Svg>
      </TaskButton>
      <TaskButton $open aria-label="Word">
        <Svg width="24" height="22" viewBox="0 0 24 22" $color="none">
          <path d="M6 0h18v5.500H6z" fill="#41a5ee" /><path d="M6 5.500h18V11H6z" fill="#2b7cd3" />
          <path d="M6 11h18v5.500H6z" fill="#185abd" /><path d="M6 16.500h18V22H6z" fill="#103f91" />
          <path d="M0 4h14v14H0z" fill="#185abd" />
          <path d="M2.800 7.500l1.900 7L7 8l2.300 6.500 1.900-7" stroke="#fff" strokeWidth="1.600" />
        </Svg>
      </TaskButton>
      <Tray>
        <TrayButton $w={20} aria-label="Hidden icons">
          <Svg width="12" height="7" viewBox="0 0 12 7" $color="#fff" $line={1.300}><path d="M.5 6.300 6 .9l5.500 5.400" /></Svg>
        </TrayButton>
        <TrayButton $w={30} aria-label="Battery">
          <Svg width="15" height="9" viewBox="0 0 15 9" $color="#fff">
            <path d="M.5.5h12.500v8H.5zM14.500 3v3" /><path d="M2 2h4v5H2z" fill="#fff" stroke="none" />
          </Svg>
        </TrayButton>
        <TrayButton $w={16} aria-label="Wi-Fi">
          <Svg width="13" height="13" viewBox="0 0 13 13" $color="#ddd" $line={1.200}>
            <path d="M1 12.500A12 12 0 0 1 13 1M4 12.500A9 9 0 0 1 13 4.500M7 12.500A6 6 0 0 1 13 7.500" /><circle cx="11.500" cy="11.500" r="1.500" fill="#fff" stroke="none" />
          </Svg>
        </TrayButton>
        <TrayButton $w={30} aria-label="Muted">
          <Svg width="15" height="12" viewBox="0 0 15 12" $color="#fff" $line={1.100}>
            <path d="M.6 3.500h2L5.500.8v10.400L2.600 8.500h-2zM9 3.500l5 5M14 3.500l-5 5" />
          </Svg>
        </TrayButton>
        <TrayButton $w={32}>ENG</TrayButton>
        <Clock>03:13<br />2020/09/23</Clock>
        <Notices aria-label="Notifications">
          <Svg width="16" height="15" viewBox="0 0 16 15" $color="#1d1d1d">
            <path d="M0 0h16v12H7l-3 3v-3H0z" fill="#fff" stroke="none" /><path d="M3 3.500h10M3 6.500h10M3 9.500h6" />
          </Svg>
          <Badge>7</Badge>
        </Notices>
      </Tray>
    </Taskbar>
  )
}


function App() {
  return (
    <Window>
      <GlobalStyle />
      <TopBar />
      <RibbonBar />
      <Workspace>
        <Canvas>
          <Document />
        </Canvas>
        <Scroll>
          <ScrollButton aria-label="Scroll up">
            <Svg width="8" height="4" viewBox="0 0 8 4" $color="none"><path d="M0 4l4-4 4 4z" fill="#606060" /></Svg>
          </ScrollButton>
          <ScrollThumb />
          <ScrollButton aria-label="Scroll down">
            <Svg width="8" height="4" viewBox="0 0 8 4" $color="none"><path d="M0 0h8L4 4z" fill="#606060" /></Svg>
          </ScrollButton>
        </Scroll>
      </Workspace>
      <Status />
      <Desktop />
    </Window>
  )
}

export default App
